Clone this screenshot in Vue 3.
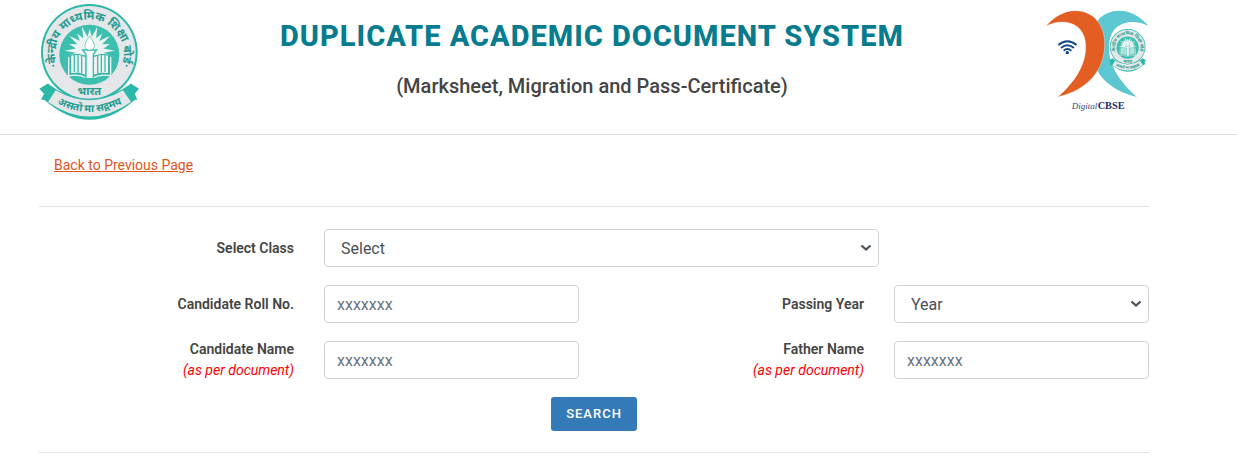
<template>
  <div class="page">
    <header>
      <div class="header-inner">
        <svg class="seal" viewBox="27 9 300 351" role="img" aria-label="CBSE">
          <defs>
            <path id="seal-ring" d="M 83 201 A 103 103 0 1 1 273 201" />
            <path id="seal-motto" d="M 62 300 Q 178 372 296 300" />
            <symbol id="seal" viewBox="27 9 300 351">
              <path d="M 55 250 L 28 266 L 42 281 L 33 299 L 66 299 Z M 301 250 L 327 266 L 314 281 L 322 299 L 290 299 Z" fill="#2bb8a8" />
              <circle cx="178" cy="157" r="145" fill="#2bb8a8" />
              <circle cx="178" cy="157" r="139" fill="#e4e6e9" />
              <circle cx="178" cy="164" r="90" fill="#3cbfae" />
              <polygon :points="rays" fill="#edf3f2" />
              <path d="M 122 165 Q 148 159 168 170 V 226 Q 146 215 122 221 Z M 236 165 Q 210 159 190 170 V 226 Q 212 215 236 221 Z" fill="#edf3f2" stroke="#2bae9f" stroke-width="3" />
              <path d="M 116 171 V 228 Q 146 221 170 234 H 188 Q 212 221 242 228 V 171" fill="none" stroke="#edf3f2" stroke-width="4" />
              <path d="M 133 165 V 216 M 144 165 V 217 M 155 167 V 219 M 203 167 V 219 M 214 165 V 217 M 225 165 V 216" stroke="#3cbfae" stroke-width="4" />
              <path d="M 158 150 H 200 L 190 163 V 236 H 168 V 163 Z" fill="#f5f8f8" stroke="#3cbfae" stroke-width="4" />
              <path d="M 179 108 Q 197 131 192 145 Q 179 156 166 145 Q 161 131 179 108 Z" fill="#fff" stroke="#3cbfae" stroke-width="2" />
              <g fill="#239b90" font-family="'Noto Sans Devanagari', 'Noto Sans', sans-serif" font-weight="700">
                <text font-size="35" text-anchor="middle"><textPath href="#seal-ring" startOffset="50%">केन्द्रीय माध्यमिक शिक्षा बोर्ड</textPath></text>
                <text x="178" y="285" font-size="33" text-anchor="middle">भारत</text>
              </g>
              <circle cx="70" cy="197" r="3" fill="#239b90" />
              <circle cx="290" cy="197" r="3" fill="#239b90" />
              <path d="M 54 251 Q 174 343 303 251 L 318 296 Q 180 422 39 296 Z" fill="#2bb8a8" />
              <path d="M 77 271 Q 178 330 279 271 L 303 306 Q 178 393 54 306 Z" fill="#e4e6e9" />
              <text fill="#239b90" font-family="'Noto Sans Devanagari', 'Noto Sans', sans-serif" font-weight="700" font-size="31" text-anchor="middle"><textPath href="#seal-motto" startOffset="50%">असतो मा सद्गमय</textPath></text>
            </symbol>
          </defs>
          <use href="#seal" x="27" y="9" width="300" height="351" />
        </svg>
        <div class="title">
          <h1>DUPLICATE ACADEMIC DOCUMENT SYSTEM</h1>
          <p>(Marksheet, Migration and Pass-Certificate)</p>
        </div>
        <svg class="digital" viewBox="30 24 312 318" role="img" aria-label="Digital CBSE">
          <path d="M 341 78 C 315 48 285 32 254 32 C 200 32 166 72 166 132 C 166 210 215 270 306 291 C 248 240 215 185 223 125 C 231 67 290 53 341 78 Z" fill="#5cc6d1" />
          <path d="M 33 78 C 59 48 89 32 120 32 C 174 32 209 72 209 132 C 209 210 159 270 68 291 C 126 240 158 185 151 125 C 143 67 84 53 33 78 Z" fill="#e25e22" stroke="#fff" stroke-width="1" />
          <g fill="none" stroke="#164a86" stroke-width="6">
            <path d="M 70 135 Q 97 112 125 135" />
            <path d="M 78 144 Q 97 128 117 144" />
            <path d="M 86 152 Q 97 142 109 152" />
          </g>
          <circle cx="97" cy="158" r="5" fill="#164a86" />
          <use href="#seal" x="222" y="84" width="111" height="133" />
          <text x="110" y="328" class="script" font-size="27">Digital</text>
          <text x="188" y="328" class="cbse" font-size="31">CBSE</text>
        </svg>
      </div>
    </header>

    <main>
      <nav><a href="#">Back to Previous Page</a></nav>

      <form @submit.prevent>
        <div class="row">
          <label for="class">Select Class</label>
          <select id="class" class="wide">
            <option>Select</option>
          </select>
        </div>
        <div class="row">
          <label for="roll">Candidate Roll No.</label>
          <input id="roll" type="text" placeholder="xxxxxxx" />
          <label for="year">Passing Year</label>
          <select id="year">
            <option>Year</option>
          </select>
        </div>
        <div class="row">
          <label for="name">Candidate Name <em>(as per document)</em></label>
          <input id="name" type="text" placeholder="xxxxxxx" />
          <label for="father">Father Name <em>(as per document)</em></label>
          <input id="father" type="text" placeholder="xxxxxxx" />
        </div>
        <button type="submit">SEARCH</button>
      </form>
    </main>
  </div>
</template>

<script setup>
// Star of light behind the torch, alternating long and short radii
const rays = Array.from({ length: 40 }, (_, i) => {
  const angle = (i / 40) * Math.PI * 2;
  const radius = i % 2 ? 42 : i % 4 ? 64 : 76;
  const x = 179 + radius * Math.cos(angle);
  const y = 152 + radius * Math.sin(angle);
  return `${x.toFixed(1)},${Math.min(y, 166).toFixed(1)}`;
}).join(" ");
</script>

<style>
body {
  margin: 0;
  background-color: #fff;
}
</style>

<style scoped>
.page {
  font-family: Roboto, sans-serif;
  font-size: 14px;
  line-height: 21px;
  color: #444;
}

header {
  border-bottom: 1px solid #dcdcdc;
}

.header-inner,
main {
  padding: 0 88px 0 39px;
}

.header-inner {
  display: flex;
  align-items: flex-start;
  justify-content: space-between;
  height: 134px;
}

.seal {
  width: 100px;
  height: 117px;
  margin-top: 3px;
}

.digital {
  width: 104px;
  height: 106px;
  margin-top: 8px;
}

.script {
  font-family: "Liberation Serif", serif;
  font-style: italic;
  fill: #3c4876;
}

.cbse {
  font-family: "Liberation Serif", serif;
  font-weight: 700;
  fill: #1c2c66;
}

.title {
  text-align: center;
}

h1 {
  margin: 18px 0 0;
  font-size: 29px;
  line-height: 36px;
  font-weight: 800;
  letter-spacing: 1px;
  color: #087c8f;
}

.title p {
  margin: 20px 0 0;
  font-size: 20px;
  line-height: 24px;
  font-weight: 500;
}

nav {
  padding: 20px 15px 30px;
  border-bottom: 1px solid #e3e3e3;
}

nav a {
  color: #e2561d;
}

form {
  display: flex;
  flex-direction: column;
  gap: 18px;
  padding: 22px 0 21px;
  border-bottom: 1px solid #e3e3e3;
}

.row {
  display: grid;
  grid-template-columns: repeat(4, 1fr);
  column-gap: 30px;
  align-items: center;
}

label {
  margin: -2px 0;
  font-weight: 600;
  text-align: right;
}

em {
  display: block;
  font-weight: 400;
  color: #f00;
}

input,
select {
  box-sizing: border-box;
  width: 100%;
  height: 38px;
  padding: 6px 12px;
  border: 1px solid #ced4da;
  border-radius: 4px;
  background-color: #fff;
  font-family: inherit;
  font-size: 16px;
  color: #495057;
}

select {
  appearance: none;
  padding: 6px 30px 6px 16px;
  background-image: url("data:image/svg+xml,%3Csvg xmlns='http://www.w3.org/2000/svg' viewBox='0 0 12 8'%3E%3Cpath d='M1.5 1.5L6 5.5L10.5 1.5' fill='none' stroke='%23495057' stroke-width='2.2'/%3E%3C/svg%3E");
  background-repeat: no-repeat;
  background-position: right 6px center;
  background-size: 12px 8px;
}

input::placeholder {
  color: #6c757d;
}

.wide {
  grid-column: span 2;
  width: calc(100% + 15px);
}

button {
  align-self: center;
  height: 34px;
  padding: 0 15px 2px;
  border: 0;
  border-radius: 3px;
  background-color: #337ab7;
  color: #fff;
  font-family: inherit;
  font-size: 13px;
  font-weight: 500;
  letter-spacing: 1px;
}
</style>
